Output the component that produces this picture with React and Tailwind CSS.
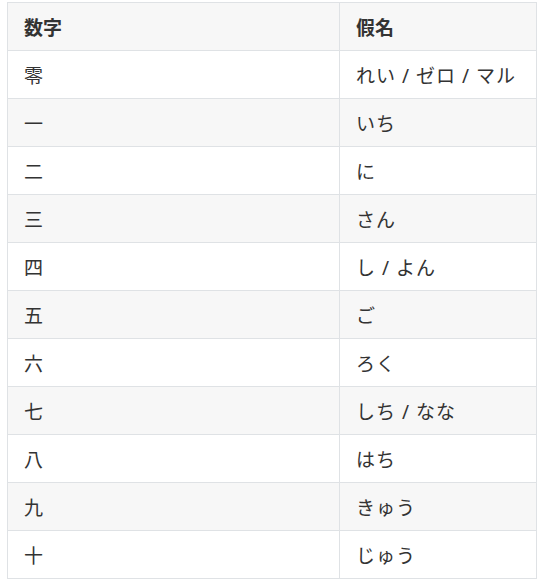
import React from 'react';

const rows = [
    ['零', 'れい / ゼロ / マル'],
    ['一', 'いち'],
    ['二', 'に'],
    ['三', 'さん'],
    ['四', 'し / よん'],
    ['五', 'ご'],
    ['六', 'ろく'],
    ['七', 'しち / なな'],
    ['八', 'はち'],
    ['九', 'きゅう'],
    ['十', 'じゅう'],
];

const App = () => {
    return (
        <div className="bg-white pt-[2px] pl-[7px]" style={{ fontFamily: '"Noto Sans", "Noto Sans CJK JP", sans-serif' }}>
            <table className="w-[530px] border-collapse text-[19px] text-[#333]">
                <thead>
                    <tr className="bg-[#f7f7f7]">
                        <th className="w-[332px] h-[48px] border border-[#dfe2e5] px-4 pt-1 text-left font-bold">数字</th>
                        <th className="h-[48px] border border-[#dfe2e5] px-4 pt-1 text-left font-bold">假名</th>
                    </tr>
                </thead>
                <tbody>
                    {rows.map(([num, kana], i) => (
                        <tr key={num} className={i % 2 === 1 ? 'bg-[#f7f7f7]' : 'bg-white'}>
                            <td className="h-[48px] border border-[#dfe2e5] px-4 pt-1">{num}</td>
                            <td className="h-[48px] border border-[#dfe2e5] px-4 pt-1 tracking-[1px]">{kana}</td>
                        </tr>
                    ))}
                </tbody>
            </table>
        </div>
    );
};

export default App;
